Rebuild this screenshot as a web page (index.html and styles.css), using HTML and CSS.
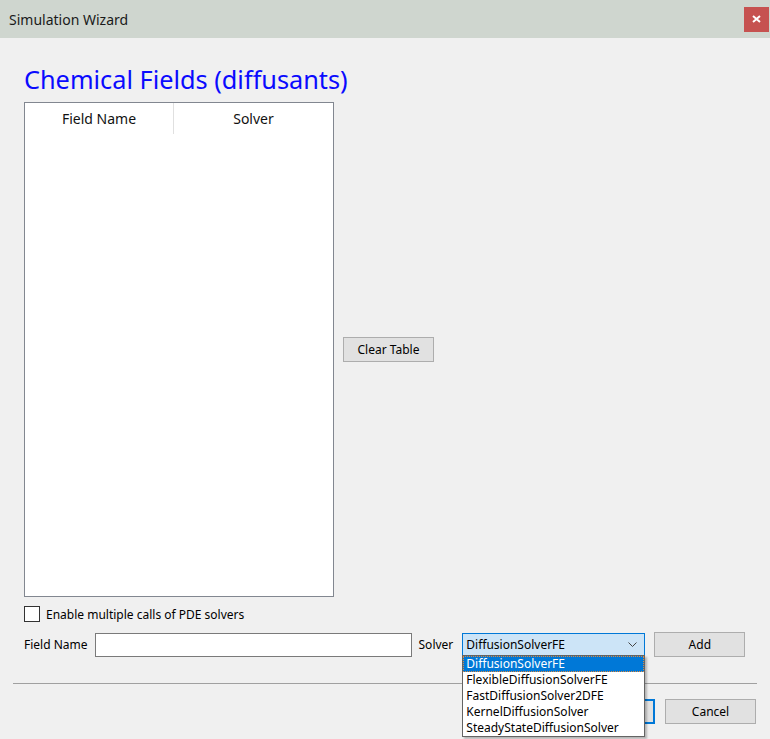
FILE: index.html
```html
<!DOCTYPE html>
<html>
<head>
<meta charset="utf-8">
<link rel="stylesheet" href="styles.css">
</head>
<body>
<div class="window">
  <div class="titlebar">
    <span class="title">Simulation Wizard</span>
    <div class="close">
      <svg width="9" height="8" viewBox="0 0 9 8"><path d="M1 1 L8 7 M8 1 L1 7" stroke="#fff" stroke-width="2" fill="none"/></svg>
    </div>
  </div>
  <div class="content">
    <h1 class="heading">Chemical Fields (diffusants)</h1>
    <div class="table-row">
      <div class="table">
        <div class="thead">
          <div class="th th-first">Field Name</div>
          <div class="th">Solver</div>
        </div>
      </div>
      <button class="btn">Clear Table</button>
    </div>
    <label class="check-row">
      <span class="checkbox"></span>
      <span>Enable multiple calls of PDE solvers</span>
    </label>
    <div class="field-row">
      <span class="lbl">Field Name</span>
      <div class="input"></div>
      <span class="lbl lbl-solver">Solver</span>
      <div class="combo-wrap">
        <div class="combo">
          <span>DiffusionSolverFE</span>
          <svg class="chev" width="9" height="5" viewBox="0 0 9 5"><path d="M0.5 0.5 L4.5 4.5 L8.5 0.5" stroke="#444" stroke-width="1" fill="none"/></svg>
        </div>
        <div class="dropdown">
          <div class="opt sel">DiffusionSolverFE</div>
          <div class="opt">FlexibleDiffusionSolverFE</div>
          <div class="opt">FastDiffusionSolver2DFE</div>
          <div class="opt">KernelDiffusionSolver</div>
          <div class="opt">SteadyStateDiffusionSolver</div>
        </div>
      </div>
      <button class="btn btn-add">Add</button>
    </div>
  </div>
  <div class="separator"></div>
  <div class="footer">
    <button class="btn btn-default">Next &gt;</button>
    <button class="btn">Cancel</button>
  </div>
</div>
</body>
</html>
```
FILE: styles.css
```css
* { box-sizing: border-box; }
html, body { margin: 0; padding: 0; }
body {
  width: 770px;
  height: 739px;
  overflow: hidden;
  background: #f0f0f0;
  font-family: "Noto Sans", "DejaVu Sans", sans-serif;
  font-size: 12px;
  color: #000;
}
.window { width: 770px; height: 739px; }
.titlebar {
  height: 38px;
  background: #cfd6cf;
  display: flex;
  align-items: center;
  justify-content: space-between;
  padding-left: 9px;
  padding-right: 1px;
}
.title { font-size: 14px; color: #1a1a1a; }
.close {
  width: 25px;
  height: 25px;
  background: #c65250;
  display: flex;
  align-items: center;
  justify-content: center;
}
.content { padding: 0 24px; }
.heading {
  margin: 0;
  padding-top: 25px;
  height: 64px;
  font-weight: normal;
  font-size: 25.3px;
  line-height: 32px;
  color: #0a0aff;
}
.table-row {
  display: flex;
  align-items: center;
  gap: 9px;
}
.table {
  width: 310px;
  height: 495px;
  background: #fff;
  border: 1px solid #828790;
}
.thead { display: flex; height: 31px; }
.th {
  display: flex;
  align-items: center;
  justify-content: center;
  font-size: 14px;
  width: 159px;
  color: #111;
}
.th-first { width: 149px; border-right: 1px solid #e0e0e0; }
.btn {
  font-family: inherit;
  font-size: 12px;
  color: #000;
  width: 91px;
  height: 25px;
  background: #e1e1e1;
  border: 1px solid #adadad;
  padding: 0;
}
.check-row {
  display: flex;
  align-items: center;
  gap: 6px;
  margin-top: 9px;
  height: 16px;
}
.checkbox {
  width: 16px;
  height: 16px;
  border: 1px solid #333;
  background: #fff;
}
.field-row {
  display: flex;
  align-items: center;
  margin-top: 10px;
  height: 25px;
}
.lbl { margin-right: 7px; }
.lbl-solver { margin-right: 9px; }
.input {
  width: 317px;
  height: 24px;
  background: #fff;
  border: 1px solid #7a7a7a;
  margin-right: 7px;
}
.combo-wrap { position: relative; margin-right: 9px; }
.combo {
  width: 183px;
  height: 23px;
  background: #cce4f7;
  border: 1px solid #0078d7;
  display: flex;
  align-items: center;
  justify-content: space-between;
  padding: 0 7px 0 3px;
}
.dropdown {
  position: absolute;
  left: 0;
  top: 22px;
  width: 183px;
  background: #fff;
  border: 1px solid #646464;
  box-shadow: 2px 2px 2px rgba(0,0,0,0.25);
  z-index: 5;
}
.opt {
  height: 16px;
  line-height: 16px;
  padding-left: 3px;
  white-space: nowrap;
}
.opt.sel {
  background: #0078d7;
  color: #fff;
  outline: 1px dotted #e08a3c;
  outline-offset: -1px;
}
.btn-add { width: 91px; }
.separator {
  margin: 26px 13px 0 13px;
  height: 1px;
  background: #a0a0a0;
}
.footer {
  display: flex;
  justify-content: flex-end;
  gap: 10px;
  padding-right: 14px;
  margin-top: 15px;
}
.btn-default { border: 2px solid #0078d7; }
```
